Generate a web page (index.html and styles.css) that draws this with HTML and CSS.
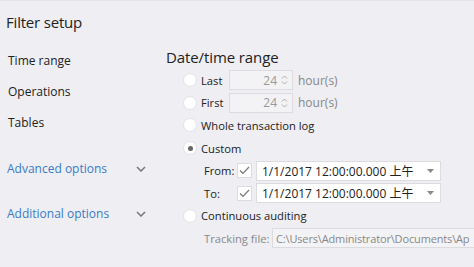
FILE: index.html
```html
<!DOCTYPE html>
<html>
<head>
<meta charset="utf-8">
<link rel="stylesheet" href="styles.css">
</head>
<body>
<div class="page">
  <div class="title">Filter setup</div>
  <div class="main">
    <nav class="side">
      <div class="nav-item">Time range</div>
      <div class="nav-item">Operations</div>
      <div class="nav-item">Tables</div>
      <div class="nav-group first"><span>Advanced options</span><svg class="chev" width="10" height="6" viewBox="0 0 10 6"><path d="M1 1 L5 5 L9 1" fill="none" stroke="#777" stroke-width="1.5"/></svg></div>
      <div class="nav-group"><span>Additional options</span><svg class="chev" width="10" height="6" viewBox="0 0 10 6"><path d="M1 1 L5 5 L9 1" fill="none" stroke="#777" stroke-width="1.5"/></svg></div>
    </nav>
    <section class="content">
      <h2 class="heading">Date/time range</h2>
      <div class="row">
        <span class="radio"></span><span class="lbl w-last">Last</span>
        <span class="spin"><span class="num">24</span><svg class="spin-arr" width="7" height="12" viewBox="0 0 7 12"><path d="M1 4.5 L3.5 2 L6 4.5 M1 7.5 L3.5 10 L6 7.5" fill="none" stroke="#aaa" stroke-width="1"/></svg></span>
        <span class="unit">hour(s)</span>
      </div>
      <div class="row">
        <span class="radio"></span><span class="lbl w-last">First</span>
        <span class="spin"><span class="num">24</span><svg class="spin-arr" width="7" height="12" viewBox="0 0 7 12"><path d="M1 4.5 L3.5 2 L6 4.5 M1 7.5 L3.5 10 L6 7.5" fill="none" stroke="#aaa" stroke-width="1"/></svg></span>
        <span class="unit">hour(s)</span>
      </div>
      <div class="row">
        <span class="radio"></span><span class="lbl">Whole transaction log</span>
      </div>
      <div class="row">
        <span class="radio on"></span><span class="lbl">Custom</span>
      </div>
      <div class="row sub">
        <span class="lbl w-from">From:</span>
        <span class="check"><svg width="11" height="9" viewBox="0 0 11 9"><path d="M1 4.5 L4 7.5 L10 1" fill="none" stroke="#777" stroke-width="1.2"/></svg></span>
        <span class="date"><span>1/1/2017 12:00:00.000 上午</span><svg class="drop" width="7" height="4" viewBox="0 0 7 4"><path d="M0 0 H7 L3.5 4 Z" fill="#888"/></svg></span>
      </div>
      <div class="row sub">
        <span class="lbl w-from">To:</span>
        <span class="check"><svg width="11" height="9" viewBox="0 0 11 9"><path d="M1 4.5 L4 7.5 L10 1" fill="none" stroke="#777" stroke-width="1.2"/></svg></span>
        <span class="date"><span>1/1/2017 12:00:00.000 上午</span><svg class="drop" width="7" height="4" viewBox="0 0 7 4"><path d="M0 0 H7 L3.5 4 Z" fill="#888"/></svg></span>
      </div>
      <div class="row">
        <span class="radio"></span><span class="lbl">Continuous auditing</span>
      </div>
      <div class="row sub">
        <span class="lbl dim w-track">Tracking file:</span>
        <span class="path">C:\Users\Administrator\Documents\Ap</span>
      </div>
    </section>
  </div>
</div>
</body>
</html>
```
FILE: styles.css
```css
* { box-sizing: border-box; }
html, body { margin: 0; padding: 0; }
body {
  width: 474px;
  height: 267px;
  overflow: hidden;
  background: #eeeef3;
  font-family: "Open Sans", "Noto Sans CJK SC", sans-serif;
  color: #222;
}
.page { border-top: 1px solid #e4e4ea; height: 267px; }
.title {
  font-size: 15px;
  padding: 11px 0 0 6px;
  height: 44px;
  color: #222;
  letter-spacing: -0.2px;
}
.main { display: flex; }
.side { width: 160px; flex: none; }
.nav-item {
  height: 31px;
  line-height: 31px;
  padding-left: 8px;
  font-size: 12px;
  color: #222;
}
.nav-group {
  display: flex;
  align-items: center;
  justify-content: space-between;
  padding: 0 14px 0 7px;
  height: 31px;
  font-size: 12px;
  color: #3a7cc6;
  margin-top: 14px;
}
.nav-group.first { margin-top: 15px; }
.content { flex: 1; padding-left: 6px; }
.heading {
  margin: 0;
  font-weight: normal;
  font-size: 15px;
  height: 24px;
  line-height: 24px;
  letter-spacing: -0.1px;
}
.row {
  display: flex;
  align-items: center;
  height: 22.6px;
  font-size: 11.2px;
  padding-left: 17px;
}
.row.sub { padding-left: 38px; }
.radio {
  width: 14px; height: 14px;
  border-radius: 50%;
  background: #fff;
  border: 1px solid #e2e2e8;
  margin-right: 4px;
  flex: none;
  position: relative;
}
.radio.on::after {
  content: "";
  position: absolute;
  left: 3.5px; top: 3.5px;
  width: 5px; height: 5px;
  border-radius: 50%;
  background: #666;
}
.lbl { white-space: nowrap; }
.w-last { width: 28px; }
.w-from { width: 33px; }
.w-track { width: 68px; }
.dim { color: #8a8a8a; }
.spin {
  width: 64px; height: 20px;
  background: #f3f3f5;
  border: 1px solid #dcdce0;
  display: flex;
  align-items: center;
  justify-content: flex-end;
  padding-right: 4px;
  color: #999;
  font-size: 12px;
}
.spin .num { margin-right: 4px; }
.unit { margin-left: 5px; color: #888; font-size: 12px; }
.check {
  width: 15px; height: 15px;
  background: #fff;
  border: 1px solid #dcdce0;
  display: flex; align-items: center; justify-content: center;
  margin-right: 4px;
}
.date {
  width: 185px; height: 20px;
  background: #fff;
  border: 1px solid #dcdce0;
  display: flex;
  align-items: center;
  justify-content: space-between;
  padding: 0 6px 0 5px;
  color: #222;
  font-size: 12px;
}
.path {
  flex: 1;
  height: 20px;
  background: #f3f3f5;
  border: 1px solid #dcdce0;
  border-right: none;
  display: flex;
  align-items: center;
  padding-left: 3px;
  color: #888;
  white-space: nowrap;
  overflow: hidden;
  font-size: 11px;
  letter-spacing: -0.15px;
}
```
